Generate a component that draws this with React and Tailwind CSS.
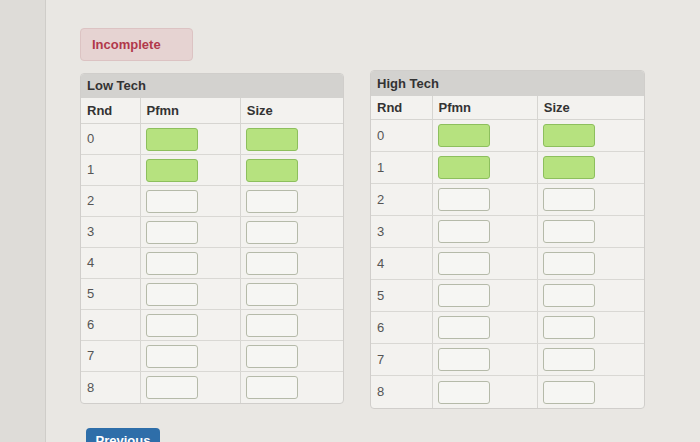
const LOW = { title: "Low Tech", filled: [0, 1] };
const HIGH = { title: "High Tech", filled: [0, 1] };
const ROUNDS = [0, 1, 2, 3, 4, 5, 6, 7, 8];

export default function App() {
  return (
    <div
      className="flex h-[442px] w-[700px] overflow-hidden bg-[#e9e7e3] text-[#333]"
      style={{ fontFamily: '"Liberation Sans", Arial, sans-serif' }}
    >
      {/* SIDE STRIP */}
      <div className="w-[46px] shrink-0 border-r border-[#cfcdc9] bg-[#dedcd8]" />

      {/* MAIN */}
      <div className="flex-1 pl-[34px] pt-[28px]">
        <div className="flex h-[33px] w-[113px] items-center rounded-[4px] border border-[#dcc3c3] bg-[#e6d3d2] pl-[11px] text-[13px] font-bold text-[#b1384b]">
          Incomplete
        </div>

        <div className="mt-[9px] flex items-start gap-[26px]">
          <TechTable
            data={LOW}
            className="mt-[3px] w-[264px]"
            cols={["w-[60px]", "w-[101px]", "w-[103px]"]}
            headH="h-[24px]"
            colH="h-[26px]"
            rowH="h-[31px]"
          />
          <TechTable
            data={HIGH}
            className="w-[275px]"
            cols={["w-[62px]", "w-[106px]", "w-[107px]"]}
            headH="h-[25px]"
            colH="h-[24px]"
            rowH="h-[32px]"
          />
        </div>

        {/* PREVIOUS */}
        <div className="ml-[6px] mt-[19px] flex h-[30px] w-[74px] justify-center rounded-[4px] bg-[#2e6ea9] pt-[5px] text-[13px] font-bold leading-[16px] text-white">
          Previous
        </div>
      </div>
    </div>
  );
}

// ── TABLE ─────────────────────
function TechTable({ data, className, cols, headH, colH, rowH }) {
  return (
    <div className={`overflow-hidden rounded-[4px] border border-[#d0cecb] bg-[#f3f2ef] ${className}`}>
      <div className={`flex items-center bg-[#d3d2cf] pl-[6px] text-[13px] font-bold text-[#333] ${headH}`}>
        {data.title}
      </div>
      <div className={`flex border-b border-[#d6d5d1] text-[13px] font-bold ${colH}`}>
        <div className={`flex items-center border-r border-[#d6d5d1] pl-[6px] ${cols[0]}`}>Rnd</div>
        <div className={`flex items-center border-r border-[#d6d5d1] pl-[6px] ${cols[1]}`}>Pfmn</div>
        <div className={`flex items-center pl-[6px] ${cols[2]}`}>Size</div>
      </div>
      {ROUNDS.map((r) => {
        const filled = data.filled.includes(r);
        return (
          <div key={r} className={`flex border-b border-[#d9d8d4] last:border-b-0 ${rowH}`}>
            <div className={`flex items-center border-r border-[#d6d5d1] pl-[6px] text-[13px] text-[#555] ${cols[0]}`}>
              {r}
            </div>
            <div className={`flex items-center border-r border-[#d6d5d1] pl-[5px] ${cols[1]}`}>
              <Box filled={filled} />
            </div>
            <div className={`flex items-center pl-[5px] ${cols[2]}`}>
              <Box filled={filled} />
            </div>
          </div>
        );
      })}
    </div>
  );
}

function Box({ filled }) {
  return filled ? (
    <div className="h-[23px] w-[52px] rounded-[3px] border border-[#8dbf5d] bg-[#b6e27f]" />
  ) : (
    <div className="h-[23px] w-[52px] rounded-[3px] border border-[#b5baa9] bg-[#f6f6f3]" />
  );
}
